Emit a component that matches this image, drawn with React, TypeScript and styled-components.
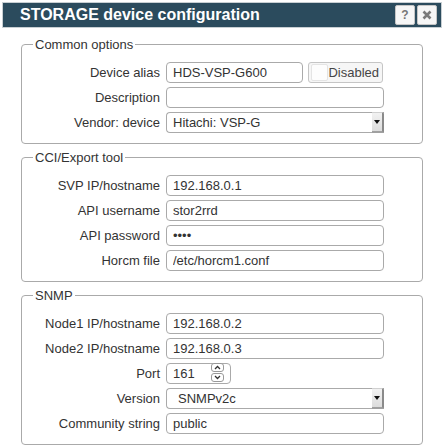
import React from "react";
import styled, { createGlobalStyle } from "styled-components";

const Global = createGlobalStyle`
  html, body { margin: 0; padding: 0; background: #fff; }
  body { font-family: "Liberation Sans", Arial, sans-serif; font-size: 13px; color: #333; }
  * { box-sizing: border-box; }
`;

const Dialog = styled.div`
  width: 445px;
  height: 447px;
  padding: 2px 3px 0 2px;
  background: #fff;
`;

const TitleBar = styled.div`
  height: 26px;
  background: #2b4b5d;
  border: 1px solid #c8cfd3;
  display: flex;
  align-items: center;
  padding: 0 4px 0 17px;
`;

const Title = styled.span`
  flex: 1;
  color: #fff;
  font-weight: bold;
  font-size: 16px;
  line-height: 20px;
`;

const TitleButton = styled.button`
  width: 20px;
  height: 20px;
  margin-left: 2px;
  padding: 0;
  display: flex;
  align-items: center;
  justify-content: center;
  background: #f6f6f6;
  border: 1px solid #c5c5c5;
  border-radius: 2px;
  color: #777;
  font-family: "Liberation Sans", Arial, sans-serif;
  font-weight: bold;
  font-size: 12px;
`;

const Content = styled.div`
  display: flex;
  flex-direction: column;
  gap: 6px;
  padding: 9px 19px 0 19px;
`;

const Fieldset = styled.fieldset`
  margin: 0;
  border: 1px solid #aaa;
  border-radius: 4px;
  padding: 0 11px 10px 11px;
`;

const Legend = styled.legend`
  padding: 0 2px;
  font-size: 13px;
  line-height: 15px;
  color: #333;
`;

const Grid = styled.div`
  display: grid;
  grid-template-columns: 127px auto;
  column-gap: 6px;
  row-gap: 4px;
  margin-top: 10px;
  align-items: center;
`;

const Label = styled.label`
  text-align: right;
  font-size: 13px;
  color: #333;
  white-space: nowrap;
`;

const Cell = styled.div`
  display: flex;
  align-items: center;
  gap: 5px;
`;

const TextInput = styled.input<{ $w?: number }>`
  width: ${(p) => p.$w ?? 218}px;
  height: 21px;
  border: 1px solid #aaa;
  border-radius: 4px;
  padding: 0 6px;
  font-family: "Liberation Sans", Arial, sans-serif;
  font-size: 13px;
  color: #333;
  background: #fff;
  outline: none;
`;

const Toggle = styled.div`
  width: 75px;
  height: 21px;
  display: flex;
  align-items: center;
  padding: 0 3px 0 2px;
  background: #f6f6f6;
  border: 1px solid #c5c5c5;
  border-radius: 3px;
  color: #454545;
  font-size: 13px;
`;

const ToggleBox = styled.span`
  width: 18px;
  height: 17px;
  background: #fdfdfd;
  border: 1px solid #e4e4e4;
  border-radius: 2px;
  margin-right: auto;
`;

const Select = styled.div`
  width: 218px;
  height: 21px;
  display: flex;
  align-items: stretch;
  border: 1px solid #aaa;
  border-right: none;
  border-radius: 4px 0 0 4px;
  background: #fff;
  color: #333;
  font-size: 13px;
`;

const SelectText = styled.span<{ $pad: number }>`
  flex: 1;
  display: flex;
  align-items: center;
  padding-left: ${(p) => p.$pad}px;
`;

const SelectArrow = styled.span`
  width: 12px;
  margin: -1px 0 -1px 0;
  display: flex;
  align-items: center;
  justify-content: center;
  background: linear-gradient(#f2f2f2, #dcdcdc);
  border-right: 2px solid #8a8a8a;
  border-bottom: 2px solid #a0a0a0;
  border-top: 1px solid #d0d0d0;
  border-radius: 0 2px 2px 0;
`;

const PortBox = styled.div`
  width: 65px;
  height: 21px;
  display: flex;
  align-items: center;
  border: 1px solid #aaa;
  border-radius: 4px;
  padding: 0 6px 0 6px;
  font-size: 13px;
  color: #333;
  background: #fff;
`;

const PortValue = styled.span`
  flex: 1;
`;

const Spin = styled.div`
  display: flex;
  flex-direction: column;
  gap: 1px;
  margin-top: -3px;
`;

const SpinButton = styled.span`
  width: 13px;
  height: 9px;
  display: flex;
  align-items: center;
  justify-content: center;
  border: 1px solid #999;
  border-radius: 3px;
  background: #fff;
`;

const Arrow = () => (
  <svg width="6" height="4" viewBox="0 0 6 4">
    <path d="M0 0h6L3 4z" fill="#111" />
  </svg>
);

const Chevron = ({ up }: { up?: boolean }) => (
  <svg width="7" height="5" viewBox="0 0 7 5">
    <path d={up ? "M1 4L3.5 1.5 6 4" : "M1 1l2.5 2.5L6 1"} fill="none" stroke="#333" strokeWidth="1.3" />
  </svg>
);

const CloseIcon = () => (
  <svg width="10" height="10" viewBox="0 0 10 10">
    <path d="M1.5 1.5l7 7M8.5 1.5l-7 7" stroke="#7a7a7a" strokeWidth="2.6" strokeLinecap="butt" />
  </svg>
);

export default function App() {
  return (
    <>
      <Global />
      <Dialog>
        <TitleBar>
          <Title>STORAGE device configuration</Title>
          <TitleButton>?</TitleButton>
          <TitleButton>
            <CloseIcon />
          </TitleButton>
        </TitleBar>
        <Content>
          <Fieldset>
            <Legend>Common options</Legend>
            <Grid>
              <Label>Device alias</Label>
              <Cell>
                <TextInput $w={137} defaultValue="HDS-VSP-G600" />
                <Toggle>
                  <ToggleBox />
                  Disabled
                </Toggle>
              </Cell>
              <Label>Description</Label>
              <Cell>
                <TextInput defaultValue="" />
              </Cell>
              <Label>Vendor: device</Label>
              <Cell>
                <Select>
                  <SelectText $pad={6}>Hitachi: VSP-G</SelectText>
                  <SelectArrow>
                    <Arrow />
                  </SelectArrow>
                </Select>
              </Cell>
            </Grid>
          </Fieldset>
          <Fieldset>
            <Legend>CCI/Export tool</Legend>
            <Grid>
              <Label>SVP IP/hostname</Label>
              <Cell>
                <TextInput defaultValue="192.168.0.1" />
              </Cell>
              <Label>API username</Label>
              <Cell>
                <TextInput defaultValue="stor2rrd" />
              </Cell>
              <Label>API password</Label>
              <Cell>
                <TextInput type="password" defaultValue="abcd" />
              </Cell>
              <Label>Horcm file</Label>
              <Cell>
                <TextInput defaultValue="/etc/horcm1.conf" />
              </Cell>
            </Grid>
          </Fieldset>
          <Fieldset>
            <Legend>SNMP</Legend>
            <Grid>
              <Label>Node1 IP/hostname</Label>
              <Cell>
                <TextInput defaultValue="192.168.0.2" />
              </Cell>
              <Label>Node2 IP/hostname</Label>
              <Cell>
                <TextInput defaultValue="192.168.0.3" />
              </Cell>
              <Label>Port</Label>
              <Cell>
                <PortBox>
                  <PortValue>161</PortValue>
                  <Spin>
                    <SpinButton>
                      <Chevron up />
                    </SpinButton>
                    <SpinButton>
                      <Chevron />
                    </SpinButton>
                  </Spin>
                </PortBox>
              </Cell>
              <Label>Version</Label>
              <Cell>
                <Select>
                  <SelectText $pad={11}>SNMPv2c</SelectText>
                  <SelectArrow>
                    <Arrow />
                  </SelectArrow>
                </Select>
              </Cell>
              <Label>Community string</Label>
              <Cell>
                <TextInput defaultValue="public" />
              </Cell>
            </Grid>
          </Fieldset>
        </Content>
      </Dialog>
    </>
  );
}
